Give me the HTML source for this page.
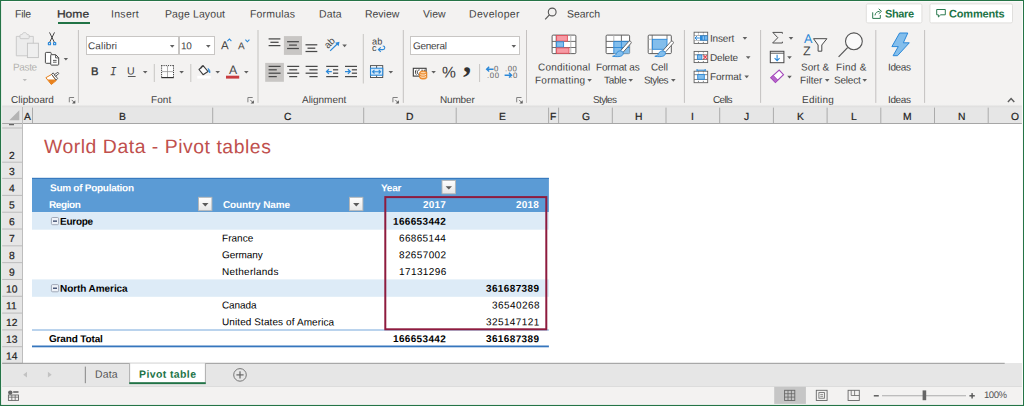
<!DOCTYPE html>
<html lang="en">
<head>
<meta charset="utf-8">
<title>World Data - Pivot tables</title>
<style>
*{box-sizing:border-box;margin:0;padding:0}
html,body{width:1024px;height:406px;overflow:hidden;background:#f3f2f1}
body{position:relative;font-family:"Liberation Sans",sans-serif;font-size:10.5px;color:#444}
.abs,.t{position:absolute}
.t{white-space:nowrap;line-height:1;display:block}
#ico{position:absolute;left:0;top:0;width:1024px;height:406px;overflow:hidden}
</style>
</head>
<body>
<div class="abs" style="left:58px;top:22px;width:32px;height:2.4px;background:#217346;"></div>
<div class="abs" style="left:0px;top:107px;width:1024px;height:17px;background:#e6e6e6;"></div>
<div class="abs" style="left:0px;top:124px;width:1024px;height:239px;background:#fff;"></div>
<div class="abs" style="left:0px;top:124px;width:22px;height:239px;background:#e6e6e6;"></div>
<div class="abs" style="left:0px;top:363px;width:1024px;height:24px;background:#e6e6e6;"></div>
<div class="abs" style="left:0px;top:387px;width:1024px;height:19px;background:#f3f2f1;"></div>
<div class="abs" style="left:85.5px;top:36.3px;width:93px;height:18.5px;background:#fff;border:1px solid #c8c6c4"></div>
<div class="abs" style="left:178.5px;top:36.3px;width:36px;height:18.5px;background:#fff;border:1px solid #c8c6c4"></div>
<div class="abs" style="left:410.2px;top:36.3px;width:110px;height:18.5px;background:#fff;border:1px solid #c8c6c4"></div>
<svg id="ico" width="1024" height="406" viewBox="0 0 1024 406">
<defs><linearGradient id="rs" x1="0" y1="0" x2="0" y2="1"><stop offset="0" stop-color="#f3f2f1"/><stop offset="1" stop-color="#dadada"/></linearGradient><linearGradient id="fb" x1="0" y1="0" x2="0" y2="1"><stop offset="0" stop-color="#ffffff"/><stop offset="1" stop-color="#e6e6e6"/></linearGradient></defs>
<circle cx="552.2" cy="12" r="3.9" fill="none" stroke="#555" stroke-width="1.1"/>
<line x1="549.40" y1="14.90" x2="545.20" y2="19.40" stroke="#555" stroke-width="1.2" />
<rect x="866.30" y="3.90" width="55.60" height="19.00" fill="#fff" stroke="#dddbd9" stroke-width="0.9" rx="1.5"/>
<rect x="929.90" y="3.90" width="82.60" height="19.00" fill="#fff" stroke="#dddbd9" stroke-width="0.9" rx="1.5"/>
<path d="M872.7 12.3v6.1h7.6v-3.4" fill="none" stroke="#2c7a50" stroke-width="1.0" />
<path d="M875.0 15.4c0.3-2.6 2-3.9 4.6-4.1" fill="none" stroke="#2c7a50" stroke-width="1.0" />
<path d="M878.7 8.8l2.8 2.5-2.8 2.5" fill="none" stroke="#2c7a50" stroke-width="1.0" />
<path d="M936.7 9.5h8.6v5.3h-4.6l-2.3 2.2v-2.2h-1.7z" fill="none" stroke="#2c7a50" stroke-width="1.0" />
<rect x="0.00" y="104.40" width="1024.00" height="2.80" fill="url(#rs)" />
<rect x="0.00" y="123.00" width="1024.00" height="1.00" fill="#a6a6a6" />
<rect x="22.00" y="107.00" width="1.00" height="256.00" fill="#bdbdbd" />
<rect x="32.00" y="107.60" width="1.00" height="15.60" fill="#ababab" />
<rect x="212.20" y="107.60" width="1.00" height="15.60" fill="#ababab" />
<rect x="363.20" y="107.60" width="1.00" height="15.60" fill="#ababab" />
<rect x="455.70" y="107.60" width="1.00" height="15.60" fill="#ababab" />
<rect x="548.10" y="107.60" width="1.00" height="15.60" fill="#ababab" />
<rect x="558.10" y="107.60" width="1.00" height="15.60" fill="#ababab" />
<rect x="611.80" y="107.60" width="1.00" height="15.60" fill="#ababab" />
<rect x="665.50" y="107.60" width="1.00" height="15.60" fill="#ababab" />
<rect x="719.20" y="107.60" width="1.00" height="15.60" fill="#ababab" />
<rect x="772.90" y="107.60" width="1.00" height="15.60" fill="#ababab" />
<rect x="826.60" y="107.60" width="1.00" height="15.60" fill="#ababab" />
<rect x="880.30" y="107.60" width="1.00" height="15.60" fill="#ababab" />
<rect x="934.00" y="107.60" width="1.00" height="15.60" fill="#ababab" />
<rect x="987.70" y="107.60" width="1.00" height="15.60" fill="#ababab" />
<rect x="1041.50" y="107.60" width="1.00" height="15.60" fill="#ababab" />
<path d="M19.3 110.3v10h-10z" fill="#b4b4b4" />
<rect x="1.00" y="127.50" width="21.50" height="1.00" fill="#bcbcbc" />
<rect x="1.00" y="161.70" width="21.50" height="1.00" fill="#bcbcbc" />
<rect x="1.00" y="177.90" width="21.50" height="1.00" fill="#bcbcbc" />
<rect x="1.00" y="194.90" width="21.50" height="1.00" fill="#bcbcbc" />
<rect x="1.00" y="211.71" width="21.50" height="1.00" fill="#bcbcbc" />
<rect x="1.00" y="228.52" width="21.50" height="1.00" fill="#bcbcbc" />
<rect x="1.00" y="245.33" width="21.50" height="1.00" fill="#bcbcbc" />
<rect x="1.00" y="262.14" width="21.50" height="1.00" fill="#bcbcbc" />
<rect x="1.00" y="278.95" width="21.50" height="1.00" fill="#bcbcbc" />
<rect x="1.00" y="295.76" width="21.50" height="1.00" fill="#bcbcbc" />
<rect x="1.00" y="312.57" width="21.50" height="1.00" fill="#bcbcbc" />
<rect x="1.00" y="329.38" width="21.50" height="1.00" fill="#bcbcbc" />
<rect x="1.00" y="346.19" width="21.50" height="1.00" fill="#bcbcbc" />
<rect x="1.00" y="362.80" width="21.50" height="1.00" fill="#bcbcbc" />
<rect x="9.00" y="124.20" width="5.00" height="1.00" fill="#444" />
<rect x="32.00" y="178.00" width="516.90" height="34.10" fill="#5b9bd5" />
<rect x="32.00" y="177.80" width="516.90" height="1.10" fill="#3577bd" />
<rect x="32.00" y="212.10" width="516.90" height="17.60" fill="#ddebf7" />
<rect x="32.00" y="279.40" width="516.90" height="17.40" fill="#ddebf7" />
<rect x="32.00" y="329.30" width="516.90" height="1.40" fill="#9dc0e6" />
<rect x="32.00" y="345.50" width="516.90" height="1.80" fill="#3676bd" />
<rect x="385.30" y="197.10" width="161.00" height="132.20" fill="none" stroke="#8e1b3e" stroke-width="2" />
<rect x="198.50" y="197.30" width="13.40" height="13.40" fill="url(#fb)" stroke="#b4b4b4" stroke-width="0.9" />
<path d="M202.10 203.10h6.40l-3.20 3.30z" fill="#5a5a5a"/>
<rect x="349.50" y="197.30" width="13.40" height="13.40" fill="url(#fb)" stroke="#b4b4b4" stroke-width="0.9" />
<path d="M353.10 203.10h6.40l-3.20 3.30z" fill="#5a5a5a"/>
<rect x="442.00" y="180.40" width="13.40" height="13.40" fill="url(#fb)" stroke="#b4b4b4" stroke-width="0.9" />
<path d="M445.60 186.20h6.40l-3.20 3.30z" fill="#5a5a5a"/>
<rect x="51.40" y="217.50" width="7.20" height="7.20" fill="#eef2f8" stroke="#98a0b0" stroke-width="0.9" rx="1.2"/>
<rect x="53.00" y="220.40" width="4.00" height="1.50" fill="#4a5878" />
<rect x="51.40" y="284.60" width="7.20" height="7.20" fill="#eef2f8" stroke="#98a0b0" stroke-width="0.9" rx="1.2"/>
<rect x="53.00" y="287.50" width="4.00" height="1.50" fill="#4a5878" />
<rect x="0.00" y="362.80" width="1004.70" height="1.00" fill="#9a9a9a" />
<rect x="0.00" y="386.20" width="1024.00" height="0.80" fill="#dadada" />
<path d="M27 371.8v5.8l-3.8-2.9z" fill="#c2c2c2" />
<path d="M47.9 371.8v5.8l3.8-2.9z" fill="#c2c2c2" />
<rect x="84.80" y="366.60" width="1.10" height="16.60" fill="#8e8e8e" />
<rect x="129.50" y="363.30" width="75.80" height="19.20" fill="#fff" />
<rect x="129.20" y="363.30" width="0.90" height="19.20" fill="#a6a6a6" />
<rect x="204.90" y="363.30" width="0.90" height="19.20" fill="#a6a6a6" />
<rect x="129.20" y="382.20" width="76.60" height="1.90" fill="#217346" />
<circle cx="240" cy="374.9" r="6.3" fill="none" stroke="#777" stroke-width="1"/>
<rect x="236.40" y="374.30" width="7.20" height="1.20" fill="#666" />
<rect x="239.40" y="371.30" width="1.20" height="7.20" fill="#666" />
<circle cx="10.3" cy="392.6" r="2.2" fill="#666"/>
<rect x="13.20" y="391.20" width="5.30" height="1.60" fill="#666" />
<rect x="8.40" y="395.00" width="10.10" height="5.40" fill="none" stroke="#666" stroke-width="0.9" />
<line x1="8.40" y1="397.20" x2="18.50" y2="397.20" stroke="#666" stroke-width="0.8" />
<line x1="11.80" y1="395.00" x2="11.80" y2="400.40" stroke="#666" stroke-width="0.8" />
<line x1="15.20" y1="395.00" x2="15.20" y2="400.40" stroke="#666" stroke-width="0.8" />
<rect x="774.20" y="386.80" width="31.70" height="18.00" fill="#c6c6c6" />
<rect x="784.60" y="390.30" width="10.20" height="10.20" fill="none" stroke="#666" stroke-width="0.9" />
<line x1="784.60" y1="393.70" x2="794.80" y2="393.70" stroke="#666" stroke-width="0.8" />
<line x1="784.60" y1="397.10" x2="794.80" y2="397.10" stroke="#666" stroke-width="0.8" />
<line x1="788.00" y1="390.30" x2="788.00" y2="400.50" stroke="#666" stroke-width="0.8" />
<line x1="791.40" y1="390.30" x2="791.40" y2="400.50" stroke="#666" stroke-width="0.8" />
<rect x="816.30" y="390.30" width="10.80" height="10.20" fill="none" stroke="#666" stroke-width="0.9" />
<rect x="818.90" y="392.60" width="5.60" height="5.60" fill="none" stroke="#666" stroke-width="0.8" />
<line x1="820.30" y1="394.60" x2="823.10" y2="394.60" stroke="#666" stroke-width="0.7" />
<line x1="820.30" y1="396.40" x2="823.10" y2="396.40" stroke="#666" stroke-width="0.7" />
<rect x="848.10" y="390.30" width="11.20" height="10.20" fill="none" stroke="#666" stroke-width="0.9" />
<path d="M851.2 390.3v5.2h8.1" fill="none" stroke="#666" stroke-width="0.8" />
<line x1="854.60" y1="390.30" x2="854.60" y2="395.50" stroke="#666" stroke-width="0.8" />
<rect x="873.80" y="395.10" width="5.00" height="1.40" fill="#555" />
<rect x="882.00" y="395.40" width="84.00" height="0.80" fill="#9a9a9a" />
<rect x="922.60" y="390.40" width="3.60" height="9.80" fill="#666" />
<rect x="969.40" y="395.10" width="5.40" height="1.40" fill="#555" />
<rect x="971.40" y="393.10" width="1.40" height="5.40" fill="#555" />
<path d="M16.3 36.4h3.6v-0.6c0-1.2 1-1.2 2.2-1.2 0.4-1.4 1.2-2 2.5-2s2.1 0.6 2.5 2c1.2 0 2.2 0 2.2 1.2v0.6h4v19.4h-17z" fill="#ececec" stroke="#c6c6c6" stroke-width="0.9" />
<path d="M20 36.2v1.6c0 0.6 0.3 0.9 0.9 0.9h7.4c0.6 0 0.9-0.3 0.9-0.9v-1.6" fill="none" stroke="#c6c6c6" stroke-width="0.9" />
<rect x="27.40" y="43.20" width="11.00" height="14.40" fill="#efefef" stroke="#c2c2c2" stroke-width="0.9" />
<path d="M22.60 78.90h4.40l-2.20 2.40z" fill="#bdbdbd"/>
<line x1="49.50" y1="32.40" x2="54.30" y2="42.20" stroke="#484848" stroke-width="1.0" />
<line x1="54.50" y1="32.40" x2="49.70" y2="42.20" stroke="#484848" stroke-width="1.0" />
<rect x="47.80" y="42.00" width="3.30" height="3.30" fill="#2b88d8" rx="0.9"/>
<rect x="53.00" y="42.00" width="3.30" height="3.30" fill="#2b88d8" rx="0.9"/>
<rect x="48.95" y="43.15" width="1.00" height="1.00" fill="#fff" />
<rect x="54.15" y="43.15" width="1.00" height="1.00" fill="#fff" />
<path d="M50.6 63.3h-4.4c-0.5 0-0.8-0.3-0.8-0.8v-9.3c0-0.5 0.3-0.8 0.8-0.8h4.2c0.5 0 0.8 0.3 0.8 0.8v1.6" fill="#fff" stroke="#484848" stroke-width="1.0" />
<path d="M51.5 54.7h4.2l3 3v6.6c0 0.5-0.3 0.8-0.8 0.8h-6.4c-0.5 0-0.8-0.3-0.8-0.8v-8.8c0-0.5 0.3-0.8 0.8-0.8z" fill="#fff" stroke="#484848" stroke-width="1.0" />
<path d="M55.6 54.9v3h3" fill="none" stroke="#484848" stroke-width="0.9" />
<line x1="53.00" y1="60.40" x2="56.60" y2="60.40" stroke="#484848" stroke-width="0.9" />
<line x1="53.00" y1="62.20" x2="56.60" y2="62.20" stroke="#484848" stroke-width="0.9" />
<path d="M63.70 57.90h4.40l-2.20 2.50z" fill="#606060"/>
<path d="M45.9 77.7l5.8-3.3 4.5 6.2-4.9 3.9z" fill="#fff" stroke="#e8821e" stroke-width="1.0" />
<path d="M47.6 79.6l7.4-0.2 1.1 1.2-4.8 3.8z" fill="#e8821e" />
<path d="M51.6 74.3l1.6-1.4 4.4 5.6-1.5 1.6z" fill="#fff" stroke="#484848" stroke-width="0.9" />
<path d="M54.3 74.7l3.6-2.4 1 1.2-3.4 2.8z" fill="#fff" stroke="#484848" stroke-width="0.9" />
<path d="M69.30 102.30v-4.8h4.8" fill="none" stroke="#808080" stroke-width="1.0" />
<path d="M71.70 99.90l2.6 2.6" fill="none" stroke="#666" stroke-width="0.9" />
<path d="M75.30 100.20v3.3h-3.3z" fill="#5a5a5a" />
<rect x="77.90" y="30.00" width="1.00" height="72.90" fill="#c4c1c0" />
<path d="M169.90 45.00h4.60l-2.30 2.70z" fill="#606060"/>
<path d="M206.00 45.00h4.60l-2.30 2.70z" fill="#606060"/>
<path d="M227.4 41.2l2-2.2 2 2.2" fill="none" stroke="#2b88d8" stroke-width="1.1" />
<path d="M245.4 39.6l2 2.2 2-2.2" fill="none" stroke="#2b88d8" stroke-width="1.1" />
<rect x="127.90" y="76.00" width="7.70" height="0.90" fill="#484848" />
<path d="M142.90 70.90h4.60l-2.30 2.70z" fill="#606060"/>
<rect x="153.80" y="64.00" width="1.00" height="18.00" fill="#c8c6c4" />
<rect x="161.30" y="65.30" width="12.50" height="11.80" fill="#fdfdfd" />
<g stroke="#3a3a3a" stroke-width="1" stroke-dasharray="1.2 1" fill="none"><path d="M161.3 65.6h12.5M161.6 65.3v11.8M173.5 65.3v11.8"/></g>
<g stroke="#8e8e8e" stroke-width="0.7" fill="none"><path d="M162 71.6h11M167.5 66v11"/></g>
<rect x="161.30" y="77.00" width="12.50" height="1.20" fill="#2e2e2e" />
<path d="M179.30 70.90h4.60l-2.30 2.70z" fill="#606060"/>
<rect x="190.30" y="64.00" width="1.00" height="18.00" fill="#c8c6c4" />
<path d="M203.3 65.9l4.7 5.6-4.9 3.2-4.1-5.2z" fill="#fdfdfd" stroke="#3c3c3c" stroke-width="1.15" stroke-linejoin="round"/>
<path d="M201.2 68.3c-0.6-1.6 0.6-3 2.1-2.6" fill="none" stroke="#3c3c3c" stroke-width="1.0" />
<path d="M208.2 68.4c1.5 1.3 2.1 2.9 1.7 4.6-1-0.7-1.5-2.1-1.7-4.6z" fill="#2b88d8" stroke="#2b88d8" stroke-width="0.7" />
<rect x="197.30" y="75.80" width="13.40" height="2.80" fill="#fff" />
<path d="M215.40 70.90h4.60l-2.30 2.70z" fill="#606060"/>
<rect x="226.00" y="75.70" width="13.20" height="2.90" fill="#c93c40" />
<path d="M244.00 70.90h4.60l-2.30 2.70z" fill="#606060"/>
<path d="M247.90 102.30v-4.8h4.8" fill="none" stroke="#808080" stroke-width="1.0" />
<path d="M250.30 99.90l2.6 2.6" fill="none" stroke="#666" stroke-width="0.9" />
<path d="M253.90 100.20v3.3h-3.3z" fill="#5a5a5a" />
<rect x="257.50" y="30.00" width="1.00" height="72.90" fill="#c4c1c0" />
<line x1="268.60" y1="38.90" x2="280.40" y2="38.90" stroke="#484848" stroke-width="1.25" />
<line x1="270.40" y1="42.30" x2="278.60" y2="42.30" stroke="#484848" stroke-width="1.25" />
<line x1="268.60" y1="45.60" x2="280.40" y2="45.60" stroke="#484848" stroke-width="1.25" />
<rect x="283.90" y="36.10" width="18.10" height="18.80" fill="#c8c6c4" />
<line x1="287.10" y1="41.70" x2="298.90" y2="41.70" stroke="#484848" stroke-width="1.25" />
<line x1="289.10" y1="45.10" x2="296.90" y2="45.10" stroke="#484848" stroke-width="1.25" />
<line x1="287.10" y1="48.50" x2="298.90" y2="48.50" stroke="#484848" stroke-width="1.25" />
<line x1="305.50" y1="44.80" x2="317.30" y2="44.80" stroke="#484848" stroke-width="1.25" />
<line x1="307.50" y1="48.20" x2="315.30" y2="48.20" stroke="#484848" stroke-width="1.25" />
<line x1="305.50" y1="51.50" x2="317.30" y2="51.50" stroke="#484848" stroke-width="1.25" />
<text transform="translate(327.9,49.0) rotate(-45)" font-family="Liberation Sans, sans-serif" font-size="9.8" fill="#484848">ab</text>
<line x1="330.10" y1="50.90" x2="338.00" y2="43.30" stroke="#2b88d8" stroke-width="1.2" />
<path d="M339.5 41.8l-4.4 0.9 3.5 3.5z" fill="#2b88d8" />
<path d="M342.30 44.60h4.60l-2.30 2.70z" fill="#606060"/>
<rect x="362.80" y="34.00" width="1.00" height="49.50" fill="#c8c6c4" />
<path d="M378.4 49.6h4.4c1.4 0 2-0.8 2-1.8s-0.6-1.8-2-1.8" fill="none" stroke="#2b88d8" stroke-width="1.1" />
<path d="M380.8 47.4l-2.4 2.2 2.4 2.2" fill="none" stroke="#2b88d8" stroke-width="1.1" />
<rect x="265.20" y="62.90" width="18.70" height="18.90" fill="#c8c6c4" />
<line x1="268.60" y1="66.40" x2="280.60" y2="66.40" stroke="#484848" stroke-width="1.25" />
<line x1="268.60" y1="69.80" x2="276.80" y2="69.80" stroke="#484848" stroke-width="1.25" />
<line x1="268.60" y1="73.20" x2="280.60" y2="73.20" stroke="#484848" stroke-width="1.25" />
<line x1="268.60" y1="76.60" x2="276.80" y2="76.60" stroke="#484848" stroke-width="1.25" />
<line x1="287.20" y1="66.40" x2="299.20" y2="66.40" stroke="#484848" stroke-width="1.25" />
<line x1="289.20" y1="69.80" x2="297.20" y2="69.80" stroke="#484848" stroke-width="1.25" />
<line x1="287.20" y1="73.20" x2="299.20" y2="73.20" stroke="#484848" stroke-width="1.25" />
<line x1="289.20" y1="76.60" x2="297.20" y2="76.60" stroke="#484848" stroke-width="1.25" />
<line x1="305.60" y1="66.40" x2="317.60" y2="66.40" stroke="#484848" stroke-width="1.25" />
<line x1="309.40" y1="69.80" x2="317.60" y2="69.80" stroke="#484848" stroke-width="1.25" />
<line x1="305.60" y1="73.20" x2="317.60" y2="73.20" stroke="#484848" stroke-width="1.25" />
<line x1="309.40" y1="76.60" x2="317.60" y2="76.60" stroke="#484848" stroke-width="1.25" />
<line x1="326.20" y1="66.40" x2="338.20" y2="66.40" stroke="#484848" stroke-width="1.25" />
<line x1="326.20" y1="76.60" x2="338.20" y2="76.60" stroke="#484848" stroke-width="1.25" />
<line x1="333.00" y1="69.80" x2="338.20" y2="69.80" stroke="#484848" stroke-width="1.25" />
<line x1="333.00" y1="73.20" x2="338.20" y2="73.20" stroke="#484848" stroke-width="1.25" />
<path d="M331.8 71.6h-5.2M328.9 69.3l-2.4 2.3 2.4 2.3" fill="none" stroke="#2b88d8" stroke-width="1.25" />
<line x1="345.00" y1="66.40" x2="357.00" y2="66.40" stroke="#484848" stroke-width="1.25" />
<line x1="345.00" y1="76.60" x2="357.00" y2="76.60" stroke="#484848" stroke-width="1.25" />
<line x1="351.80" y1="69.80" x2="357.00" y2="69.80" stroke="#484848" stroke-width="1.25" />
<line x1="351.80" y1="73.20" x2="357.00" y2="73.20" stroke="#484848" stroke-width="1.25" />
<path d="M345.0 71.6h5.2M347.9 69.3l2.4 2.3-2.4 2.3" fill="none" stroke="#2b88d8" stroke-width="1.25" />
<rect x="370.50" y="65.60" width="12.20" height="11.90" fill="#fff" stroke="#555" stroke-width="1.0" />
<line x1="376.60" y1="65.60" x2="376.60" y2="68.20" stroke="#555" stroke-width="1.0" />
<line x1="376.60" y1="75.20" x2="376.60" y2="77.50" stroke="#555" stroke-width="1.0" />
<rect x="370.50" y="68.20" width="12.20" height="7.00" fill="#d4e8f8" stroke="#2b88d8" stroke-width="1.1" />
<path d="M372.6 71.7h8.0M374.5 69.9l-1.9 1.8 1.9 1.8M378.7 69.9l1.9 1.8-1.9 1.8" fill="none" stroke="#2b88d8" stroke-width="1.1" />
<path d="M388.50 70.90h4.60l-2.30 2.70z" fill="#606060"/>
<path d="M392.90 102.30v-4.8h4.8" fill="none" stroke="#808080" stroke-width="1.0" />
<path d="M395.30 99.90l2.6 2.6" fill="none" stroke="#666" stroke-width="0.9" />
<path d="M398.90 100.20v3.3h-3.3z" fill="#5a5a5a" />
<rect x="402.80" y="30.00" width="1.00" height="72.90" fill="#c4c1c0" />
<path d="M511.50 45.00h4.60l-2.30 2.70z" fill="#606060"/>
<rect x="413.30" y="68.30" width="12.80" height="7.80" fill="#fff" stroke="#3c3c3c" stroke-width="1.1" />
<path d="M416.4 69.8c-1.3 1-1.3 3.8 0 4.8M419.6 69.8c-1.6 0.2-2.3 1.2-2.3 2.4s0.7 2.2 2.3 2.4" fill="none" stroke="#3c3c3c" stroke-width="1.0" />
<path d="M421.4 70.3h1.4M423.8 70.3h1.6" fill="none" stroke="#3c3c3c" stroke-width="1.1" />
<path d="M419.6 72.6v4.9c0 0.9 1.6 1.6 3.6 1.6s3.6-0.7 3.6-1.6v-4.9c0-0.9-1.6-1.6-3.6-1.6s-3.6 0.7-3.6 1.6z" fill="#f0953a" stroke="#e8801a" stroke-width="0.8" />
<path d="M420.4 74.3c0.6 0.6 1.6 0.8 2.8 0.8s2.2-0.2 2.8-0.8M420.4 76.5c0.6 0.6 1.6 0.8 2.8 0.8s2.2-0.2 2.8-0.8" fill="none" stroke="#fff" stroke-width="0.8" />
<ellipse cx="423.2" cy="72.5" rx="2.6" ry="0.8" fill="#fbd3a8"/>
<path d="M431.30 70.90h4.60l-2.30 2.70z" fill="#606060"/>
<rect x="479.10" y="64.00" width="1.00" height="18.00" fill="#c8c6c4" />
<path d="M493.6 69.2h-6.6M489.2 66.8l-2.6 2.4 2.6 2.4" fill="none" stroke="#2b88d8" stroke-width="1.35" />
<path d="M504.6 75.2h6.6M509.0 72.8l2.6 2.4-2.6 2.4" fill="none" stroke="#2b88d8" stroke-width="1.35" />
<path d="M516.70 102.30v-4.8h4.8" fill="none" stroke="#808080" stroke-width="1.0" />
<path d="M519.10 99.90l2.6 2.6" fill="none" stroke="#666" stroke-width="0.9" />
<path d="M522.70 100.20v3.3h-3.3z" fill="#5a5a5a" />
<rect x="526.00" y="30.00" width="1.00" height="72.90" fill="#c4c1c0" />
<rect x="552.10" y="35.10" width="23.80" height="18.50" fill="#fff" stroke="#5c5c5c" stroke-width="1.0" rx="1"/>
<line x1="552.10" y1="41.40" x2="575.90" y2="41.40" stroke="#5c5c5c" stroke-width="0.9" />
<line x1="552.10" y1="47.50" x2="575.90" y2="47.50" stroke="#5c5c5c" stroke-width="0.9" />
<line x1="556.20" y1="35.10" x2="556.20" y2="53.60" stroke="#5c5c5c" stroke-width="0.9" />
<line x1="570.80" y1="35.10" x2="570.80" y2="53.60" stroke="#b0b0b0" stroke-width="0.9" />
<rect x="556.60" y="35.50" width="10.80" height="5.60" fill="#f79aa4" stroke="#e2505c" stroke-width="0.9" />
<rect x="556.60" y="41.80" width="7.00" height="5.40" fill="#83beec" stroke="#2b88d8" stroke-width="0.9" />
<rect x="556.60" y="47.90" width="12.40" height="5.40" fill="#f79aa4" stroke="#e2505c" stroke-width="0.9" />
<path d="M587.30 79.00h4.60l-2.30 2.70z" fill="#606060"/>
<rect x="606.10" y="35.10" width="23.50" height="18.50" fill="#fff" stroke="#5c5c5c" stroke-width="1.0" rx="1"/>
<rect x="613.80" y="41.40" width="15.80" height="12.20" fill="#83beec" />
<line x1="606.10" y1="41.40" x2="629.60" y2="41.40" stroke="#5c5c5c" stroke-width="0.9" />
<line x1="606.10" y1="47.50" x2="613.80" y2="47.50" stroke="#5c5c5c" stroke-width="0.9" />
<line x1="613.80" y1="35.10" x2="613.80" y2="41.40" stroke="#b0b0b0" stroke-width="0.9" />
<line x1="621.40" y1="35.10" x2="621.40" y2="41.40" stroke="#5c5c5c" stroke-width="0.9" />
<line x1="613.80" y1="41.40" x2="613.80" y2="53.60" stroke="#2b88d8" stroke-width="0.9" />
<line x1="621.40" y1="41.40" x2="621.40" y2="53.60" stroke="#2b88d8" stroke-width="0.9" />
<line x1="613.80" y1="47.50" x2="629.60" y2="47.50" stroke="#2b88d8" stroke-width="0.9" />
<line x1="613.80" y1="41.40" x2="629.60" y2="41.40" stroke="#2b88d8" stroke-width="0.9" />
<path d="M630.2 41.2c0.9 0.3 1.3 1.0 1.0 1.8l-8.4 9.6-2.2-1.9 8.2-9.3c0.4-0.4 0.9-0.4 1.4-0.2z" fill="#fff" stroke="#5c5c5c" stroke-width="0.9" />
<path d="M620.8 50.9c1.6 0.2 2.6 1.2 2.4 2.8-0.3 2.4-3.4 3.6-10.6 2.6 2.6-0.6 3.2-1.4 3.8-2.8 0.8-1.8 2.4-2.8 4.4-2.6z" fill="#83beec" stroke="#2b88d8" stroke-width="0.9" />
<path d="M628.40 79.00h4.60l-2.30 2.70z" fill="#606060"/>
<rect x="648.20" y="35.10" width="23.10" height="18.50" fill="#fff" stroke="#5c5c5c" stroke-width="1.0" rx="1"/>
<line x1="652.20" y1="35.10" x2="652.20" y2="53.60" stroke="#5c5c5c" stroke-width="0.8" />
<line x1="667.00" y1="35.10" x2="667.00" y2="39.30" stroke="#5c5c5c" stroke-width="0.8" />
<line x1="648.20" y1="39.30" x2="652.20" y2="39.30" stroke="#b0b0b0" stroke-width="0.8" />
<line x1="648.20" y1="49.30" x2="652.20" y2="49.30" stroke="#b0b0b0" stroke-width="0.8" />
<rect x="652.40" y="39.30" width="14.60" height="10.00" fill="#83beec" stroke="#2b88d8" stroke-width="0.9" />
<path d="M672.4000000000001 41.2c0.9 0.3 1.3 1.0 1.0 1.8l-8.4 9.6-2.2-1.9 8.2-9.3c0.4-0.4 0.9-0.4 1.4-0.2z" fill="#fff" stroke="#5c5c5c" stroke-width="0.9" />
<path d="M663.0 50.9c1.6 0.2 2.6 1.2 2.4 2.8-0.3 2.4-3.4 3.6-10.6 2.6 2.6-0.6 3.2-1.4 3.8-2.8 0.8-1.8 2.4-2.8 4.4-2.6z" fill="#83beec" stroke="#2b88d8" stroke-width="0.9" />
<path d="M671.00 79.00h4.60l-2.30 2.70z" fill="#606060"/>
<rect x="683.90" y="30.00" width="1.00" height="72.90" fill="#c4c1c0" />
<rect x="694.10" y="32.20" width="13.60" height="11.20" fill="#fff" stroke="#5a5a5a" stroke-width="0.85" />
<line x1="694.10" y1="35.56" x2="707.70" y2="35.56" stroke="#6a6a6a" stroke-width="0.8" />
<line x1="694.10" y1="40.26" x2="707.70" y2="40.26" stroke="#6a6a6a" stroke-width="0.8" />
<g stroke="#6a6a6a" stroke-width="0.8" stroke-dasharray="1.2 1.2"><line x1="698.45" y1="32.2" x2="698.45" y2="43.400000000000006"/><line x1="703.35" y1="32.2" x2="703.35" y2="43.400000000000006"/></g>
<rect x="699.80" y="35.40" width="7.90" height="5.20" fill="#2b88d8" />
<rect x="702.60" y="36.20" width="1.60" height="3.50" fill="#8cc4f0" />
<rect x="705.20" y="36.20" width="1.60" height="3.50" fill="#8cc4f0" />
<rect x="694.60" y="35.60" width="5.20" height="4.80" fill="#fff" />
<path d="M699.8 38h-4.6M697.1 36l-2.1 2 2.1 2" fill="none" stroke="#2b88d8" stroke-width="1.0" />
<path d="M742.60 37.00h4.60l-2.30 2.70z" fill="#606060"/>
<rect x="694.10" y="51.40" width="13.60" height="11.20" fill="#fff" stroke="#5a5a5a" stroke-width="0.85" />
<line x1="694.10" y1="54.76" x2="707.70" y2="54.76" stroke="#6a6a6a" stroke-width="0.8" />
<line x1="694.10" y1="59.46" x2="707.70" y2="59.46" stroke="#6a6a6a" stroke-width="0.8" />
<g stroke="#6a6a6a" stroke-width="0.8" stroke-dasharray="1.2 1.2"><line x1="698.45" y1="51.4" x2="698.45" y2="62.599999999999994"/><line x1="703.35" y1="51.4" x2="703.35" y2="62.599999999999994"/></g>
<rect x="697.40" y="54.90" width="4.40" height="4.40" fill="#83beec" stroke="#2b88d8" stroke-width="0.9" />
<path d="M703.5 55.1l3.6 4M707.1 55.1l-3.6 4" fill="none" stroke="#e8434f" stroke-width="1.1" />
<path d="M745.90 56.30h4.60l-2.30 2.70z" fill="#606060"/>
<rect x="694.10" y="71.20" width="13.60" height="11.50" fill="#fff" stroke="#5a5a5a" stroke-width="0.85" />
<line x1="694.10" y1="74.65" x2="707.70" y2="74.65" stroke="#6a6a6a" stroke-width="0.8" />
<line x1="694.10" y1="79.48" x2="707.70" y2="79.48" stroke="#6a6a6a" stroke-width="0.8" />
<g stroke="#6a6a6a" stroke-width="0.8" stroke-dasharray="1.2 1.2"><line x1="698.45" y1="71.2" x2="698.45" y2="82.7"/><line x1="703.35" y1="71.2" x2="703.35" y2="82.7"/></g>
<rect x="697.70" y="74.40" width="6.60" height="4.90" fill="#83beec" stroke="#2b88d8" stroke-width="0.9" />
<path d="M697 70.2h8.2M697 69v2.4M705.2 69v2.4" fill="none" stroke="#2b88d8" stroke-width="1.0" />
<path d="M744.40 75.60h4.60l-2.30 2.70z" fill="#606060"/>
<rect x="760.10" y="30.00" width="1.00" height="72.90" fill="#c4c1c0" />
<path d="M782.4 33.7v-1.3h-9.6l5.0 5.3-5.2 5.3h9.8v-1.3" fill="none" stroke="#505050" stroke-width="1.0" />
<path d="M788.70 37.00h4.60l-2.30 2.70z" fill="#606060"/>
<rect x="770.30" y="51.30" width="13.60" height="11.40" fill="#fff" stroke="#484848" stroke-width="1.0" />
<line x1="770.30" y1="53.20" x2="783.90" y2="53.20" stroke="#484848" stroke-width="0.9" />
<path d="M777.1 54.8v5.6M774.6 58.1l2.5 2.5 2.5-2.5" fill="none" stroke="#2b88d8" stroke-width="1.1" />
<path d="M787.20 56.30h4.60l-2.30 2.70z" fill="#606060"/>
<path d="M770.8 77.7l8.4-7.6 4.3 4.6-8.1 7.8z" fill="#fff" stroke="#a347ba" stroke-width="1.1" />
<path d="M770.8 77.7l2.5-2.3 4.5 4.7-2.4 2.4z" fill="#b765cb" stroke="#a347ba" stroke-width="0.8" />
<path d="M787.20 75.80h4.60l-2.30 2.70z" fill="#606060"/>
<path d="M813.5 38.7h13.4l-5.1 6.3v6.2h-3.7v-6.2z" fill="#fafafa" stroke="#484848" stroke-width="1.0" stroke-linejoin="round"/>
<path d="M824.90 79.00h4.60l-2.30 2.70z" fill="#606060"/>
<circle cx="853.9" cy="41.3" r="8.4" fill="#fafafa" stroke="#555" stroke-width="1.1"/>
<line x1="847.60" y1="47.60" x2="838.60" y2="56.80" stroke="#555" stroke-width="1.2" />
<path d="M862.40 79.00h4.60l-2.30 2.70z" fill="#606060"/>
<rect x="875.30" y="30.00" width="1.00" height="72.90" fill="#c4c1c0" />
<path d="M899.6 33h8.2l-4.5 9.8h6l-11.8 12.9h-4.4l5.2-9.1h-6.4z" fill="#83beec" stroke="#2b88d8" stroke-width="1.0" stroke-linejoin="round"/>
<rect x="924.10" y="30.00" width="1.00" height="72.90" fill="#c4c1c0" />
<path d="M1007.9 101.9l3.2-3.3 3.2 3.3" fill="none" stroke="#5e5e5e" stroke-width="1.5" />
<rect x="1.00" y="1.00" width="1022.00" height="1.10" fill="#fcfafa" />
<rect x="1.00" y="1.00" width="1.10" height="404.00" fill="#fcfafa" />
<rect x="1021.90" y="1.00" width="1.10" height="404.00" fill="#fcfafa" />
<rect x="1.00" y="403.90" width="1022.00" height="1.10" fill="#fcfafa" />
<rect x="0.00" y="0.00" width="1024.00" height="1.00" fill="#257447" />
<rect x="0.00" y="0.00" width="1.10" height="406.00" fill="#257447" />
<rect x="1023.00" y="0.00" width="1.00" height="406.00" fill="#257447" />
<rect x="0.00" y="404.90" width="1024.00" height="1.10" fill="#257447" />
</svg>
<span class="t" style="left:14.95px;top:8px;font-size:10.5px;transform:matrix(1,0.0008,0,1,0,0.50);letter-spacing:-0.250px;">File</span>
<span class="t" style="left:57.45px;top:8px;font-size:10.5px;color:#333;-webkit-text-stroke:0.25px #333;transform:matrix(1.1514,0.0008,0,1,0,0.50);transform-origin:0.75px 0;">Home</span>
<span class="t" style="left:111.30px;top:8px;font-size:10.5px;transform:matrix(1,0.0008,0,1,0,0.50);letter-spacing:0.290px;">Insert</span>
<span class="t" style="left:164.75px;top:8px;font-size:10.5px;transform:matrix(1,0.0008,0,1,0,0.50);letter-spacing:0.105px;">Page Layout</span>
<span class="t" style="left:249.65px;top:8px;font-size:10.5px;transform:matrix(1,0.0008,0,1,0,0.50);letter-spacing:0.179px;">Formulas</span>
<span class="t" style="left:318.85px;top:8px;font-size:10.5px;transform:matrix(1,0.0008,0,1,0,0.50);letter-spacing:0.167px;">Data</span>
<span class="t" style="left:365.45px;top:8px;font-size:10.5px;transform:matrix(1,0.0008,0,1,0,0.50);letter-spacing:-0.030px;">Review</span>
<span class="t" style="left:423.20px;top:8px;font-size:10.5px;transform:matrix(1,0.0008,0,1,0,0.50);">View</span>
<span class="t" style="left:468.75px;top:8px;font-size:10.5px;transform:matrix(1,0.0008,0,1,0,0.50);letter-spacing:0.325px;">Developer</span>
<span class="t" style="left:566.60px;top:8px;font-size:10.5px;transform:matrix(1,0.0008,0,1,0,0.50);letter-spacing:-0.050px;">Search</span>
<span class="t" style="left:885.25px;top:8px;font-size:11px;transform:matrix(1,0.0008,0,1,0,0.60);letter-spacing:-0.375px;font-weight:bold;color:#217346;">Share</span>
<span class="t" style="left:949.10px;top:8px;font-size:11px;transform:matrix(1,0.0008,0,1,0,0.60);letter-spacing:-0.171px;font-weight:bold;color:#217346;">Comments</span>
<span class="t" style="left:24.12px;top:112px;font-size:10.3px;transform:matrix(1,0.0008,0,1,0,0.00);color:#222;-webkit-text-stroke:0.2px #222;">A</span>
<span class="t" style="left:119.10px;top:112px;font-size:10.3px;transform:matrix(1,0.0008,0,1,0,0.00);color:#222;-webkit-text-stroke:0.2px #222;">B</span>
<span class="t" style="left:284.45px;top:112px;font-size:10.3px;transform:matrix(1,0.0008,0,1,0,0.00);color:#222;-webkit-text-stroke:0.2px #222;">C</span>
<span class="t" style="left:406.07px;top:112px;font-size:10.3px;transform:matrix(1,0.0008,0,1,0,0.00);color:#222;-webkit-text-stroke:0.2px #222;">D</span>
<span class="t" style="left:498.77px;top:112px;font-size:10.3px;transform:matrix(1,0.0008,0,1,0,0.00);color:#222;-webkit-text-stroke:0.2px #222;">E</span>
<span class="t" style="left:550.23px;top:112px;font-size:10.3px;transform:matrix(1,0.0008,0,1,0,0.00);color:#222;-webkit-text-stroke:0.2px #222;">F</span>
<span class="t" style="left:581.58px;top:112px;font-size:10.3px;transform:matrix(1,0.0008,0,1,0,0.00);color:#222;-webkit-text-stroke:0.2px #222;">G</span>
<span class="t" style="left:635.40px;top:112px;font-size:10.3px;transform:matrix(1,0.0008,0,1,0,0.00);color:#222;-webkit-text-stroke:0.2px #222;">H</span>
<span class="t" style="left:691.35px;top:112px;font-size:10.3px;transform:matrix(1,0.0008,0,1,0,0.00);color:#222;-webkit-text-stroke:0.2px #222;">I</span>
<span class="t" style="left:744.17px;top:112px;font-size:10.3px;transform:matrix(1,0.0008,0,1,0,0.00);color:#222;-webkit-text-stroke:0.2px #222;">J</span>
<span class="t" style="left:796.50px;top:112px;font-size:10.3px;transform:matrix(1,0.0008,0,1,0,0.00);color:#222;-webkit-text-stroke:0.2px #222;">K</span>
<span class="t" style="left:850.83px;top:112px;font-size:10.3px;transform:matrix(1,0.0008,0,1,0,0.00);color:#222;-webkit-text-stroke:0.2px #222;">L</span>
<span class="t" style="left:903.40px;top:112px;font-size:10.3px;transform:matrix(1,0.0008,0,1,0,0.00);color:#222;-webkit-text-stroke:0.2px #222;">M</span>
<span class="t" style="left:957.60px;top:112px;font-size:10.3px;transform:matrix(1,0.0008,0,1,0,0.00);color:#222;-webkit-text-stroke:0.2px #222;">N</span>
<span class="t" style="left:1011.10px;top:112px;font-size:10.3px;transform:matrix(1,0.0008,0,1,0,0.00);color:#222;-webkit-text-stroke:0.2px #222;">O</span>
<span class="t" style="left:8.62px;top:150px;font-size:10.3px;transform:matrix(1,0.0008,0,1,0,0.90);color:#222;-webkit-text-stroke:0.2px #222;">2</span>
<span class="t" style="left:8.62px;top:167px;font-size:10.3px;transform:matrix(1,0.0008,0,1,0,0.03);color:#222;-webkit-text-stroke:0.2px #222;">3</span>
<span class="t" style="left:8.62px;top:183px;font-size:10.3px;transform:matrix(1,0.0008,0,1,0,0.80);color:#222;-webkit-text-stroke:0.2px #222;">4</span>
<span class="t" style="left:8.62px;top:200px;font-size:10.3px;transform:matrix(1,0.0008,0,1,0,0.57);color:#222;-webkit-text-stroke:0.2px #222;">5</span>
<span class="t" style="left:8.62px;top:217px;font-size:10.3px;transform:matrix(1,0.0008,0,1,0,0.34);color:#222;-webkit-text-stroke:0.2px #222;">6</span>
<span class="t" style="left:8.62px;top:234px;font-size:10.3px;transform:matrix(1,0.0008,0,1,0,0.11);color:#222;-webkit-text-stroke:0.2px #222;">7</span>
<span class="t" style="left:8.62px;top:250px;font-size:10.3px;transform:matrix(1,0.0008,0,1,0,0.88);color:#222;-webkit-text-stroke:0.2px #222;">8</span>
<span class="t" style="left:8.62px;top:267px;font-size:10.3px;transform:matrix(1,0.0008,0,1,0,0.65);color:#222;-webkit-text-stroke:0.2px #222;">9</span>
<span class="t" style="left:5.70px;top:284px;font-size:10.3px;transform:matrix(1,0.0008,0,1,0,0.42);color:#222;-webkit-text-stroke:0.2px #222;">10</span>
<span class="t" style="left:6.20px;top:301px;font-size:10.3px;transform:matrix(1,0.0008,0,1,0,0.19);color:#222;-webkit-text-stroke:0.2px #222;">11</span>
<span class="t" style="left:5.82px;top:317px;font-size:10.3px;transform:matrix(1,0.0008,0,1,0,0.96);color:#222;-webkit-text-stroke:0.2px #222;">12</span>
<span class="t" style="left:5.82px;top:334px;font-size:10.3px;transform:matrix(1,0.0008,0,1,0,0.73);color:#222;-webkit-text-stroke:0.2px #222;">13</span>
<span class="t" style="left:5.70px;top:351px;font-size:10.3px;transform:matrix(1,0.0008,0,1,0,0.50);color:#222;-webkit-text-stroke:0.2px #222;">14</span>
<span class="t" style="left:44.35px;top:137px;font-size:19.4px;transform:matrix(1,0.0008,0,1,0,0.10);letter-spacing:0.531px;color:#c0504d;">World Data - Pivot tables</span>
<span class="t" style="left:49.65px;top:183px;font-size:10px;transform:matrix(1,0.0008,0,1,0,0.20);letter-spacing:-0.269px;font-weight:bold;color:#fff;">Sum of Population</span>
<span class="t" style="left:381.05px;top:183px;font-size:10px;transform:matrix(1,0.0008,0,1,0,0.20);letter-spacing:-0.250px;font-weight:bold;color:#fff;">Year</span>
<span class="t" style="left:49.15px;top:199px;font-size:10px;transform:matrix(1,0.0008,0,1,0,0.97);letter-spacing:-0.400px;font-weight:bold;color:#fff;">Region</span>
<span class="t" style="left:222.50px;top:199px;font-size:10px;transform:matrix(1,0.0008,0,1,0,0.97);letter-spacing:-0.109px;font-weight:bold;color:#fff;">Country Name</span>
<span class="t" style="left:423.45px;top:199px;font-size:10px;transform:matrix(1,0.0008,0,1,0,0.97);letter-spacing:0.200px;font-weight:bold;color:#fff;">2017</span>
<span class="t" style="left:515.85px;top:199px;font-size:10px;transform:matrix(1,0.0008,0,1,0,0.97);letter-spacing:0.183px;font-weight:bold;color:#fff;">2018</span>
<span class="t" style="left:59.95px;top:216px;font-size:10px;transform:matrix(1,0.0008,0,1,0,0.74);letter-spacing:-0.260px;font-weight:bold;color:#000;">Europe</span>
<span class="t" style="left:393.30px;top:216px;font-size:10px;transform:matrix(1,0.0008,0,1,0,0.74);letter-spacing:0.344px;font-weight:bold;color:#000;">166653442</span>
<span class="t" style="left:222.15px;top:233px;font-size:10px;transform:matrix(1,0.0008,0,1,0,0.51);letter-spacing:0.020px;color:#000;">France</span>
<span class="t" style="left:399.20px;top:233px;font-size:10px;transform:matrix(1,0.0008,0,1,0,0.51);letter-spacing:0.336px;color:#000;">66865144</span>
<span class="t" style="left:222.40px;top:250px;font-size:10px;transform:matrix(1,0.0008,0,1,0,0.28);letter-spacing:-0.050px;color:#000;">Germany</span>
<span class="t" style="left:399.20px;top:250px;font-size:10px;transform:matrix(1,0.0008,0,1,0,0.28);letter-spacing:0.371px;color:#000;">82657002</span>
<span class="t" style="left:222.15px;top:267px;font-size:10px;transform:matrix(1,0.0008,0,1,0,0.05);letter-spacing:0.250px;color:#000;">Netherlands</span>
<span class="t" style="left:398.95px;top:267px;font-size:10px;transform:matrix(1,0.0008,0,1,0,0.05);letter-spacing:0.407px;color:#000;">17131296</span>
<span class="t" style="left:60.15px;top:283px;font-size:10px;transform:matrix(1,0.0008,0,1,0,0.82);letter-spacing:-0.075px;font-weight:bold;color:#000;">North America</span>
<span class="t" style="left:485.85px;top:283px;font-size:10px;transform:matrix(1,0.0008,0,1,0,0.82);letter-spacing:0.375px;font-weight:bold;color:#000;">361687389</span>
<span class="t" style="left:222.40px;top:300px;font-size:10px;transform:matrix(1,0.0008,0,1,0,0.59);letter-spacing:-0.100px;color:#000;">Canada</span>
<span class="t" style="left:491.50px;top:300px;font-size:10px;transform:matrix(1,0.0008,0,1,0,0.59);letter-spacing:0.443px;color:#000;">36540268</span>
<span class="t" style="left:222.15px;top:317px;font-size:10px;transform:matrix(1,0.0008,0,1,0,0.36);letter-spacing:0.089px;color:#000;">United States of America</span>
<span class="t" style="left:485.60px;top:317px;font-size:10px;transform:matrix(1,0.0008,0,1,0,0.36);letter-spacing:0.406px;color:#000;">325147121</span>
<span class="t" style="left:49.10px;top:334px;font-size:10px;transform:matrix(1,0.0008,0,1,0,0.13);letter-spacing:-0.155px;font-weight:bold;color:#000;">Grand Total</span>
<span class="t" style="left:393.30px;top:334px;font-size:10px;transform:matrix(1,0.0008,0,1,0,0.13);letter-spacing:0.344px;font-weight:bold;color:#000;">166653442</span>
<span class="t" style="left:485.85px;top:334px;font-size:10px;transform:matrix(1,0.0008,0,1,0,0.13);letter-spacing:0.375px;font-weight:bold;color:#000;">361687389</span>
<span class="t" style="left:95.35px;top:368px;font-size:10.5px;transform:matrix(1,0.0008,0,1,0,0.80);letter-spacing:0.167px;color:#555;">Data</span>
<span class="t" style="left:139.15px;top:368px;font-size:10.5px;transform:matrix(1,0.0008,0,1,0,0.80);letter-spacing:0.390px;font-weight:bold;color:#217346;">Pivot table</span>
<span class="t" style="left:984.15px;top:390px;font-size:9.6px;transform:matrix(1,0.0008,0,1,0,0.10);letter-spacing:-0.467px;color:#555;">100%</span>
<span class="t" style="left:13.15px;top:62px;font-size:10.0px;transform:matrix(1,0.0008,0,1,0,0.40);letter-spacing:-0.350px;color:#b4b2b0;">Paste</span>
<span class="t" style="left:10.90px;top:94px;font-size:10.0px;transform:matrix(1,0.0008,0,1,0,0.90);letter-spacing:0.006px;">Clipboard</span>
<span class="t" style="left:88.20px;top:41px;font-size:10.0px;transform:matrix(1,0.0008,0,1,0,0.30);letter-spacing:0.125px;">Calibri</span>
<span class="t" style="left:181.45px;top:41px;font-size:10.0px;transform:matrix(1,0.0008,0,1,0,0.30);letter-spacing:-0.200px;">10</span>
<span class="t" style="left:220.60px;top:40px;font-size:11.5px;transform:matrix(1,0.0008,0,1,0,0.30);">A</span>
<span class="t" style="left:238.20px;top:41px;font-size:10px;transform:matrix(1,0.0008,0,1,0,0.30);">A</span>
<span class="t" style="left:91.15px;top:66px;font-size:11.5px;font-weight:bold;transform:matrix(0.9143,0.0008,0,1,0,0.30);transform-origin:0.75px 0;">B</span>
<span class="t" style="left:109.90px;top:66px;font-size:12.6px;font-style:italic;font-family:'Liberation Mono',monospace;transform:matrix(0.8593,0.0008,0,1,0,0.30);transform-origin:0.50px 0;">I</span>
<span class="t" style="left:127.15px;top:65px;font-size:10.6px;transform:matrix(1,0.0008,0,1,0,0.50);">U</span>
<span class="t" style="left:228.90px;top:64px;font-size:12.2px;transform:matrix(1,0.0008,0,1,0,0.00);color:#4a4a4a;">A</span>
<span class="t" style="left:150.85px;top:94px;font-size:10.0px;transform:matrix(1,0.0008,0,1,0,0.90);letter-spacing:0.050px;">Font</span>
<span class="t" style="left:371.95px;top:37px;font-size:9.2px;transform:matrix(1,0.0008,0,1,0,0.50);letter-spacing:0.250px;">ab</span>
<span class="t" style="left:372.15px;top:44px;font-size:9.2px;transform:matrix(1,0.0008,0,1,0,0.00);">c</span>
<span class="t" style="left:301.70px;top:94px;font-size:10.0px;transform:matrix(1,0.0008,0,1,0,0.90);letter-spacing:-0.025px;">Alignment</span>
<span class="t" style="left:413.00px;top:41px;font-size:10.0px;transform:matrix(1,0.0008,0,1,0,0.30);letter-spacing:-0.283px;">General</span>
<span class="t" style="left:441.50px;top:64px;font-size:15.6px;transform:matrix(1,0.0008,0,1,0,0.60);color:#3a3a3a;">%</span>
<span class="t" style="left:463.40px;top:45px;font-size:33px;transform:matrix(1,0.0008,0,1,0,0.00);font-weight:bold;color:#333;font-family:'Liberation Serif',serif;">,</span>
<span class="t" style="left:494.15px;top:65px;font-size:7.8px;transform:matrix(1,0.0008,0,1,0,0.30);color:#666;">0</span>
<span class="t" style="left:487.05px;top:71px;font-size:7.8px;transform:matrix(1,0.0008,0,1,0,0.90);letter-spacing:0.625px;color:#666;">.00</span>
<span class="t" style="left:505.45px;top:65px;font-size:7.8px;transform:matrix(1,0.0008,0,1,0,0.30);letter-spacing:0.525px;color:#666;">.00</span>
<span class="t" style="left:509.85px;top:71px;font-size:7.8px;transform:matrix(1,0.0008,0,1,0,0.90);letter-spacing:0.900px;color:#666;">.0</span>
<span class="t" style="left:440.25px;top:94px;font-size:10.0px;transform:matrix(1,0.0008,0,1,0,0.90);letter-spacing:-0.170px;">Number</span>
<span class="t" style="left:538.20px;top:62px;font-size:10.0px;transform:matrix(1,0.0008,0,1,0,0.40);letter-spacing:0.230px;">Conditional</span>
<span class="t" style="left:535.05px;top:75px;font-size:10.0px;transform:matrix(1,0.0008,0,1,0,0.60);letter-spacing:0.256px;">Formatting</span>
<span class="t" style="left:595.75px;top:62px;font-size:10.0px;transform:matrix(1,0.0008,0,1,0,0.40);letter-spacing:-0.162px;">Format as</span>
<span class="t" style="left:604.05px;top:75px;font-size:10.0px;transform:matrix(1,0.0008,0,1,0,0.60);letter-spacing:-0.287px;">Table</span>
<span class="t" style="left:651.20px;top:62px;font-size:10.0px;transform:matrix(1,0.0008,0,1,0,0.40);letter-spacing:-0.100px;">Cell</span>
<span class="t" style="left:643.60px;top:75px;font-size:10.0px;transform:matrix(1,0.0008,0,1,0,0.60);letter-spacing:-0.560px;">Styles</span>
<span class="t" style="left:593.40px;top:94px;font-size:10.0px;transform:matrix(1,0.0008,0,1,0,0.90);letter-spacing:-0.660px;">Styles</span>
<span class="t" style="left:709.90px;top:33px;font-size:10.0px;transform:matrix(1,0.0008,0,1,0,0.80);letter-spacing:-0.160px;">Insert</span>
<span class="t" style="left:710.15px;top:52px;font-size:10.0px;transform:matrix(1,0.0008,0,1,0,0.90);letter-spacing:-0.170px;">Delete</span>
<span class="t" style="left:710.15px;top:72px;font-size:10.0px;transform:matrix(1,0.0008,0,1,0,0.10);letter-spacing:-0.040px;">Format</span>
<span class="t" style="left:712.80px;top:94px;font-size:10.0px;transform:matrix(1,0.0008,0,1,0,0.90);letter-spacing:-0.675px;">Cells</span>
<span class="t" style="left:803.50px;top:33px;font-size:12.6px;transform:matrix(1,0.0008,0,1,0,0.00);color:#2b88d8;">A</span>
<span class="t" style="left:803.35px;top:45px;font-size:12.6px;transform:matrix(1,0.0008,0,1,0,0.20);">Z</span>
<span class="t" style="left:800.70px;top:62px;font-size:10.0px;transform:matrix(1,0.0008,0,1,0,0.40);letter-spacing:0.070px;">Sort &amp;</span>
<span class="t" style="left:800.45px;top:75px;font-size:10.0px;transform:matrix(1,0.0008,0,1,0,0.60);letter-spacing:0.030px;">Filter</span>
<span class="t" style="left:835.95px;top:62px;font-size:10.0px;transform:matrix(1,0.0008,0,1,0,0.40);letter-spacing:0.280px;">Find &amp;</span>
<span class="t" style="left:834.10px;top:75px;font-size:10.0px;transform:matrix(1,0.0008,0,1,0,0.60);letter-spacing:-0.210px;">Select</span>
<span class="t" style="left:801.95px;top:94px;font-size:10.0px;transform:matrix(1,0.0008,0,1,0,0.90);letter-spacing:0.208px;">Editing</span>
<span class="t" style="left:888.40px;top:62px;font-size:10.0px;transform:matrix(1,0.0008,0,1,0,0.40);letter-spacing:-0.362px;">Ideas</span>
<span class="t" style="left:888.40px;top:94px;font-size:10.0px;transform:matrix(1,0.0008,0,1,0,0.90);letter-spacing:-0.362px;">Ideas</span>

</body>
</html>
